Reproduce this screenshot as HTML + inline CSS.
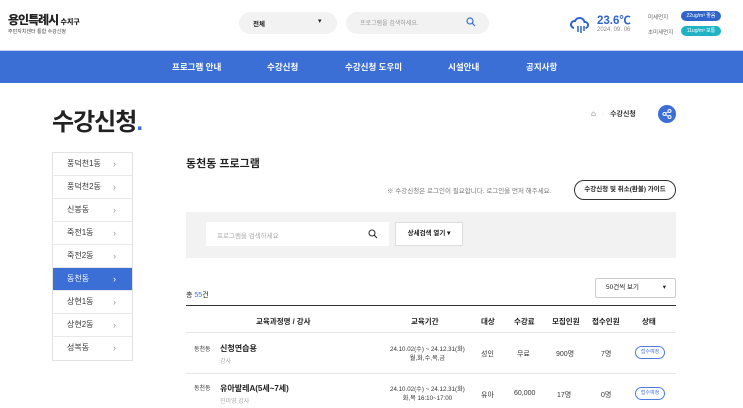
<!DOCTYPE html>
<html><head><meta charset="utf-8">
<style>
*{margin:0;padding:0;box-sizing:border-box}
body{width:743px;height:408px;overflow:hidden;background:#fff;font-family:"Liberation Sans","Noto Sans CJK KR",sans-serif;color:#222;position:relative}
.a{position:absolute;white-space:nowrap}
.nav{position:absolute;left:0;top:50px;width:743px;height:33px;background:#3b6fd6;border-top:1px solid #c4d4ef}
.nav span{position:absolute;top:10px;color:#fff;font-size:8.5px;font-weight:bold}
.side{position:absolute;left:52px;top:152px;width:81px;border:1px solid #e2e2e2}
.side div{height:23px;border-bottom:1px solid #e8e8e8;font-size:8px;padding-left:14px;line-height:22px;position:relative;color:#333}
.side div:after{content:"›";position:absolute;left:60px;color:#999;font-size:9px}
.side div.on{background:#3b6fd6;color:#fff}
.side div.on:after{color:#fff}
.th{font-size:7.5px;font-weight:bold;top:316px}
.td{font-size:7px;color:#333}
.pill{position:absolute;width:30px;height:13px;border:1px solid #4b7be0;border-radius:7px;color:#4b7be0;font-size:5px;text-align:center;line-height:11px}
</style></head><body>
<div class="a" style="left:8px;top:11px;font-size:12px;font-weight:900;letter-spacing:-1px">용인특례시 <span style="font-size:7px;letter-spacing:0">수지구</span></div>
<div class="a" style="left:8px;top:28px;font-size:5px;color:#444">주민자치센터 통합 수강신청</div>
<div class="a" style="left:239px;top:12px;width:98px;height:22px;background:#f2f2f2;border-radius:11px"></div>
<div class="a" style="left:253px;top:18px;font-size:6.5px;font-weight:bold">전체</div>
<div class="a" style="left:318px;top:17px;font-size:7px">▾</div>
<div class="a" style="left:346px;top:12px;width:143px;height:22px;background:#f2f2f2;border-radius:11px"></div>
<div class="a" style="left:360px;top:18px;font-size:6px;color:#999">프로그램을 검색하세요.</div>
<svg class="a" style="left:466px;top:17px" width="10" height="10"><circle cx="4" cy="4" r="3" fill="none" stroke="#3b6fd6" stroke-width="1.2"/><path d="M6.3 6.3L9 9" stroke="#3b6fd6" stroke-width="1.2"/></svg>
<svg class="a" style="left:570px;top:15px" width="20" height="20"><path d="M4 13a3.5 3.5 0 0 1 1-7a5 5 0 0 1 9.5 1a3 3 0 0 1 1 6" fill="none" stroke="#2f64c9" stroke-width="2"/><path d="M8 11v6M11 11v7M14 11v5" stroke="#2f64c9" stroke-width="1.5"/></svg>
<div class="a" style="left:597px;top:12px;font-size:11.5px;font-weight:bold;color:#2f64c9">23.6℃</div>
<div class="a" style="left:597px;top:27px;font-size:6px;color:#888">2024. 09. 06</div>
<div class="a" style="left:648px;top:13px;font-size:5.5px;color:#666">미세먼지</div>
<div class="a" style="left:648px;top:28px;font-size:5.5px;color:#666">초미세먼지</div>
<div class="a" style="left:681px;top:11px;width:40px;height:10px;border-radius:5px;background:#2f64c9;color:#fff;font-size:5px;text-align:center;line-height:10px">22ug/m³ 좋음</div>
<div class="a" style="left:681px;top:26px;width:40px;height:10px;border-radius:5px;background:#20b3c4;color:#fff;font-size:5px;text-align:center;line-height:10px">11ug/m³ 보통</div>
<div class="nav"><span style="left:172px">프로그램 안내</span><span style="left:267px">수강신청</span><span style="left:345px">수강신청 도우미</span><span style="left:448px">시설안내</span><span style="left:526px">공지사항</span></div>
<div class="a" style="left:52px;top:102px;font-size:24px;font-weight:bold;letter-spacing:-1px">수강신청<span style="color:#3b6fd6">.</span></div>
<div class="a" style="left:591px;top:109px;font-size:7px;color:#555"><span style="font-size:8px">⌂</span> <span style="color:#ccc;margin:0 4px">·</span> <b style="color:#333">수강신청</b></div>
<div class="a" style="left:658px;top:105px;width:18px;height:18px;border-radius:50%;background:#3b6fd6"></div>
<svg class="a" style="left:662px;top:109px" width="10" height="10"><circle cx="7.5" cy="2" r="1.5" fill="none" stroke="#fff"/><circle cx="2.5" cy="5" r="1.5" fill="none" stroke="#fff"/><circle cx="7.5" cy="8" r="1.5" fill="none" stroke="#fff"/><path d="M4 4.2L6.2 2.8M4 5.8L6.2 7.2" stroke="#fff" stroke-width="0.9"/></svg>
<div class="side"><div>풍덕천1동</div><div>풍덕천2동</div><div>신봉동</div><div>죽전1동</div><div>죽전2동</div><div class="on">동천동</div><div>상현1동</div><div>상현2동</div><div style="border-bottom:0">성복동</div></div>
<div class="a" style="left:186px;top:155px;font-size:11px;font-weight:bold">동천동 프로그램</div>
<div class="a" style="left:387px;top:185px;font-size:6.5px;color:#777">※ 수강신청은 로그인이 필요합니다. 로그인을 먼저 해주세요.</div>
<div class="a" style="left:574px;top:180px;width:102px;height:20px;border:1px solid #333;border-radius:10px;font-size:6.5px;font-weight:bold;text-align:center;line-height:18px">수강신청 및 취소(환불) 가이드</div>
<div class="a" style="left:186px;top:212px;width:490px;height:46px;background:#f2f2f2"></div>
<div class="a" style="left:206px;top:222px;width:183px;height:24px;background:#fff"></div>
<div class="a" style="left:217px;top:230px;font-size:6.5px;color:#aaa">프로그램을 검색하세요</div>
<svg class="a" style="left:368px;top:229px" width="10" height="10"><circle cx="4" cy="4" r="3" fill="none" stroke="#333" stroke-width="1.1"/><path d="M6.3 6.3L9 9" stroke="#333" stroke-width="1.1"/></svg>
<div class="a" style="left:395px;top:222px;width:68px;height:24px;background:#fff;border:1px solid #ddd;font-size:6.5px;font-weight:bold;text-align:center;line-height:22px">상세검색 열기 ▾</div>
<div class="a" style="left:186px;top:290px;font-size:7px">총 <span style="color:#3b6fd6">55</span>건</div>
<div class="a" style="left:595px;top:278px;width:81px;height:20px;border:1px solid #ccc;border-radius:2px;font-size:6.5px;padding-left:10px;line-height:18px">50건씩 보기<span style="position:absolute;right:9px">▾</span></div>
<div class="a" style="left:186px;top:305px;width:490px;height:1px;background:#333"></div>
<div class="a th" style="left:256px">교육과정명 / 강사</div>
<div class="a th" style="left:411px">교육기간</div>
<div class="a th" style="left:481px">대상</div>
<div class="a th" style="left:514px">수강료</div>
<div class="a th" style="left:552px">모집인원</div>
<div class="a th" style="left:592px">접수인원</div>
<div class="a th" style="left:642px">상태</div>
<div class="a" style="left:186px;top:332px;width:490px;height:1px;background:#e6e6e6"></div>
<div class="a" style="left:186px;top:373px;width:490px;height:1px;background:#e6e6e6"></div>
<div class="a td" style="left:194px;top:344px;font-size:6px">동천동</div>
<div class="a" style="left:220px;top:343px;font-size:8px;font-weight:bold">신청연습용</div>
<div class="a" style="left:220px;top:356px;font-size:6px;color:#aaa">강사</div>
<div class="a td" style="left:390px;top:345px;font-size:6.2px;text-align:center;line-height:9px">24.10.02(수) ~ 24.12.31(화)<br>월,화,수,목,금</div>
<div class="a td" style="left:481px;top:349px">성인</div>
<div class="a td" style="left:517px;top:349px">무료</div>
<div class="a td" style="left:556px;top:349px">900명</div>
<div class="a td" style="left:601px;top:349px">7명</div>
<div class="pill" style="left:635px;top:346px">접수예정</div>
<div class="a td" style="left:194px;top:383px;font-size:6px">동천동</div>
<div class="a" style="left:220px;top:383px;font-size:8px;font-weight:bold">유아발레A(5세~7세)</div>
<div class="a" style="left:220px;top:396px;font-size:6px;color:#aaa">진미영 강사</div>
<div class="a td" style="left:390px;top:385px;font-size:6.2px;text-align:center;line-height:9px">24.10.02(수) ~ 24.12.31(화)<br>화,목 16:10~17:00</div>
<div class="a td" style="left:481px;top:390px">유아</div>
<div class="a td" style="left:514px;top:390px">60,000</div>
<div class="a td" style="left:557px;top:390px">17명</div>
<div class="a td" style="left:601px;top:390px">0명</div>
<div class="pill" style="left:635px;top:387px">접수예정</div>
</body></html>
